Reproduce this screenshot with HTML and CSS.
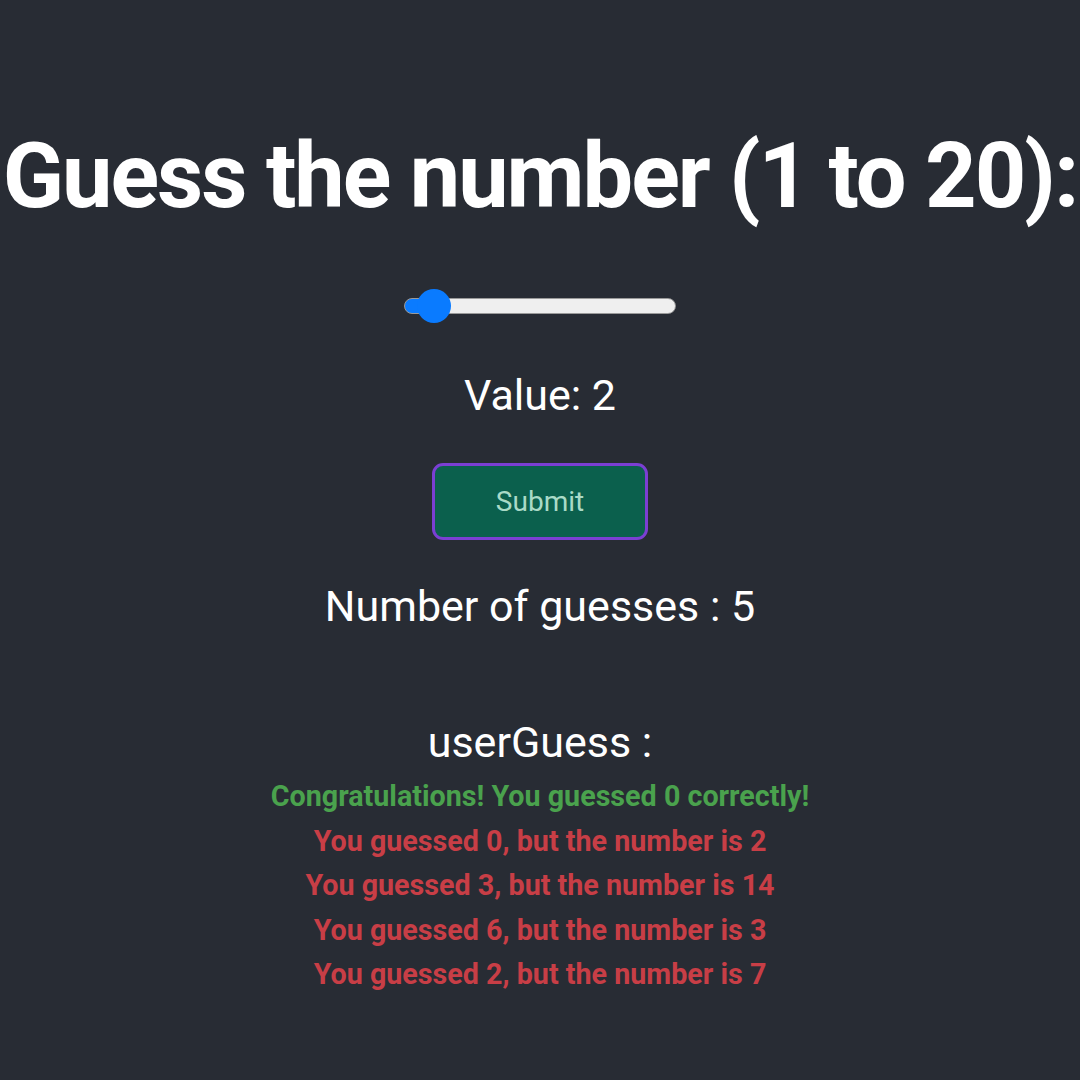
FILE: index.html
```html
<!DOCTYPE html>
<html lang="en">
<head>
<meta charset="utf-8">
<title>Guess the number</title>
<link rel="stylesheet" href="styles.css">
</head>
<body>
<main class="app">
  <h1 class="title">Guess the number (1 to 20):</h1>
  <input class="slider" type="range" min="1" max="20" value="2" style="--fill: 10%;">
  <p class="value">Value: 2</p>
  <button class="submit" type="button">Submit</button>
  <p class="count">Number of guesses : 5</p>
  <section class="history">
    <h2 class="history-title">userGuess :</h2>
    <ul class="results">
      <li class="result correct">Congratulations! You guessed 0 correctly!</li>
      <li class="result wrong">You guessed 0, but the number is 2</li>
      <li class="result wrong">You guessed 3, but the number is 14</li>
      <li class="result wrong">You guessed 6, but the number is 3</li>
      <li class="result wrong">You guessed 2, but the number is 7</li>
    </ul>
  </section>
</main>
</body>
</html>
```
FILE: styles.css
```css
html, body {
  margin: 0;
  padding: 0;
  background: #282c34;
  color: #ffffff;
  font-family: Roboto, "Liberation Sans", Arial, sans-serif;
}

.app {
  display: flex;
  flex-direction: column;
  align-items: center;
  text-align: center;
  padding-top: 123px;
  overflow: hidden;
}

.title {
  margin: 0;
  font-size: 90px;
  font-weight: 700;
  line-height: 108px;
  letter-spacing: -2px;
  white-space: nowrap;
}

.slider {
  -webkit-appearance: none;
  appearance: none;
  margin: 58px 0 0;
  width: 272px;
  height: 34px;
  background: transparent;
}

.slider::-webkit-slider-runnable-track {
  height: 16px;
  border-radius: 8px;
  box-sizing: border-box;
  border: 1.5px solid #9a9a9a;
  background: linear-gradient(to right, #0a7bff 0, #0a7bff var(--fill), #efefef var(--fill));
}

.slider::-webkit-slider-thumb {
  -webkit-appearance: none;
  appearance: none;
  width: 34px;
  height: 34px;
  margin-top: -10px;
  border-radius: 50%;
  background: #0a7bff;
  border: none;
}

.value {
  margin: 47px 0 0;
  font-size: 43px;
  line-height: 50px;
}

.submit {
  margin-top: 43px;
  width: 216px;
  height: 77px;
  box-sizing: border-box;
  border: 3px solid #7b3fd3;
  border-radius: 11px;
  background: #0b604d;
  color: #a9dac7;
  font-family: Roboto, "Liberation Sans", Arial, sans-serif;
  font-size: 28px;
}

.count {
  margin: 41px 0 0;
  font-size: 43px;
  line-height: 50px;
}

.history {
  margin-top: 86px;
  display: flex;
  flex-direction: column;
  align-items: center;
}

.history-title {
  margin: 0;
  font-size: 43px;
  font-weight: 400;
  line-height: 50px;
}

.results {
  list-style: none;
  margin: 7px 0 0;
  padding: 0;
}

.result {
  font-size: 28.7px;
  font-weight: 700;
  line-height: 44.5px;
}

.correct {
  color: #4aa24d;
}

.wrong {
  color: #c83e46;
}
```
